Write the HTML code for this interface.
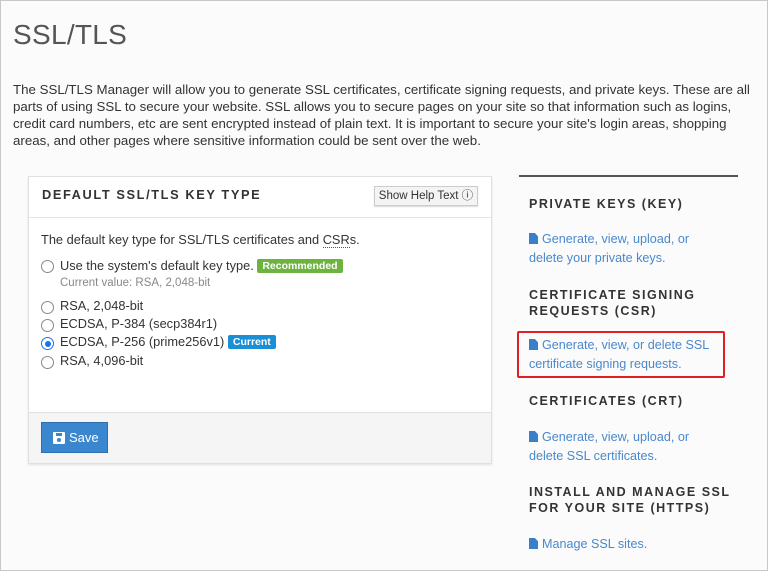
<!DOCTYPE html>
<html><head><style>
*{box-sizing:border-box;margin:0;padding:0}
body{width:768px;height:571px;background:#fbfbfb;font-family:"Liberation Sans",sans-serif;color:#333;position:relative;overflow:hidden}
.frame{position:absolute;left:0;top:0;width:768px;height:571px;border:1px solid #c8c8c8;pointer-events:none}
.a{position:absolute;white-space:nowrap}
h1{position:absolute;left:13px;top:19px;font-size:28px;font-weight:normal;color:#555;letter-spacing:0.3px}
.intro{position:absolute;left:13px;top:81px;white-space:nowrap;font-size:13.3px;line-height:17px;color:#333}
.panel{position:absolute;left:28px;top:176px;width:464px;height:288px;background:#fff;border:1px solid #e0e0e0;box-shadow:0 1px 2px rgba(0,0,0,.1)}
.ph{height:41px;border-bottom:1px solid #e3e3e3}
.ttl{font-size:12.8px;font-weight:bold;letter-spacing:1.6px;color:#333}
.btnh{position:absolute;left:345px;top:9px;width:104px;height:20px;border:1px solid #ccc;background:#f4f4f4;font-size:11.5px;line-height:18px;text-align:center;color:#333;box-shadow:0 1px 1px rgba(0,0,0,.15)}
.foot{position:absolute;left:0;top:235px;width:462px;height:51px;background:#f5f5f5;border-top:1px solid #e0e0e0}
.save{position:absolute;left:12px;top:9px;width:67px;height:31px;background:#3a87cf;border:1px solid #2e6fae;color:#fff;font-size:13px;line-height:29px;padding-left:27px}
.radio{position:absolute;width:13px;height:13px;border:1px solid #888;border-radius:50%;background:#fff}
.radio.on{border-color:#1a73e8}
.radio.on:after{content:"";position:absolute;left:2.5px;top:2.5px;width:6px;height:6px;border-radius:50%;background:#1a73e8}
.t{font-size:12.8px;color:#333}
.badge{display:inline-block;color:#fff;font-size:10.5px;font-weight:bold;padding:1px 5px;border-radius:2px;vertical-align:1px}
.side h3{position:absolute;left:529px;font-size:12.5px;font-weight:bold;letter-spacing:1.5px;color:#333;line-height:16px}
.lk{position:absolute;left:529px;font-size:12.6px;color:#4a88cc;line-height:19px}
.ic{display:inline-block;width:9px;height:11px;background:#3a80c8;margin-right:4px;vertical-align:-1px;clip-path:polygon(0 0,65% 0,100% 30%,100% 100%,0 100%)}
</style></head><body>
<h1>SSL/TLS</h1>
<div class="intro">The SSL/TLS Manager will allow you to generate SSL certificates, certificate signing requests, and private keys. These are all<br>parts of using SSL to secure your website. SSL allows you to secure pages on your site so that information such as logins,<br>credit card numbers, etc are sent encrypted instead of plain text. It is important to secure your site's login areas, shopping<br>areas, and other pages where sensitive information could be sent over the web.</div>
<div class="panel">
<div class="ph"><div class="a ttl" style="left:13px;top:10px">DEFAULT SSL/TLS KEY TYPE</div><div class="btnh">Show Help Text ⓘ</div></div>
<div class="a t" style="left:12px;top:55px">The default key type for SSL/TLS certificates and <span style="border-bottom:1px dotted #555">CSR</span>s.</div>
<div class="radio" style="left:12px;top:83px"></div>
<div class="a t" style="left:31px;top:81px">Use the system's default key type. <span class="badge" style="background:#6db33f">Recommended</span></div>
<div class="a" style="left:31px;top:100px;font-size:11.5px;color:#888">Current value: RSA, 2,048-bit</div>
<div class="radio" style="left:12px;top:124px"></div><div class="a t" style="left:31px;top:121px">RSA, 2,048-bit</div>
<div class="radio" style="left:12px;top:142px"></div><div class="a t" style="left:31px;top:139px">ECDSA, P-384 (secp384r1)</div>
<div class="radio on" style="left:12px;top:160px"></div><div class="a t" style="left:31px;top:157px">ECDSA, P-256 (prime256v1) <span class="badge" style="background:#1a8fd6">Current</span></div>
<div class="radio" style="left:12px;top:179px"></div><div class="a t" style="left:31px;top:176px">RSA, 4,096-bit</div>
<div class="foot"><div class="save"><span style="position:absolute;left:11px;top:9px;width:12px;height:12px;background:#fff;border-radius:1px"><span style="position:absolute;left:3px;top:1px;width:6px;height:3px;background:#3a87cf"></span><span style="position:absolute;left:4px;top:6px;width:4px;height:4px;border-radius:50%;background:#3a87cf"></span></span>Save</div></div>
</div>
<div class="side">
<div class="a" style="left:519px;top:175px;width:219px;height:2px;background:#555"></div>
<h3 style="top:196px">PRIVATE KEYS (KEY)</h3>
<div class="lk" style="top:230px"><span class="ic"></span>Generate, view, upload, or<br>delete your private keys.</div>
<h3 style="top:287px">CERTIFICATE SIGNING<br>REQUESTS (CSR)</h3>
<div class="a" style="left:517px;top:331px;width:208px;height:47px;border:2px solid #e02020;border-radius:2px"></div>
<div class="lk" style="top:336px"><span class="ic"></span>Generate, view, or delete SSL<br>certificate signing requests.</div>
<h3 style="top:393px">CERTIFICATES (CRT)</h3>
<div class="lk" style="top:428px"><span class="ic"></span>Generate, view, upload, or<br>delete SSL certificates.</div>
<h3 style="top:484px">INSTALL AND MANAGE SSL<br>FOR YOUR SITE (HTTPS)</h3>
<div class="lk" style="top:535px"><span class="ic"></span>Manage SSL sites.</div>
</div>
<div class="frame"></div>
</body></html>
